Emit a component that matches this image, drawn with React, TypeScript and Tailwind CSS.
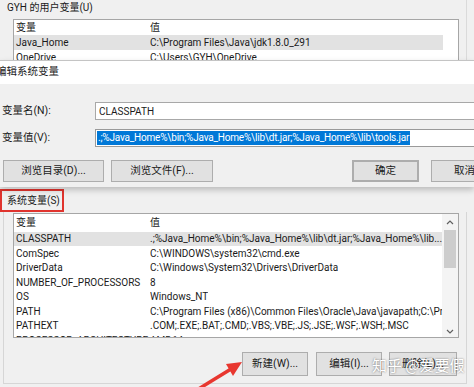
import React from 'react'

type RowProps = {
  name: string
  value: string
  selected?: boolean
  tall?: boolean
}

// one line of the variable list: name column + value column
function VarRow({ name, value, selected, tall }: RowProps) {
  return (
    <div
      className={`flex items-center shrink-0 whitespace-nowrap overflow-hidden ${tall ? 'h-[15px]' : 'h-[14.5px]'} ${
        selected ? 'bg-[#e2e2e2]' : ''
      }`}
    >
      <span className="w-[136px] shrink-0 pl-[2px]">{name}</span>
      <span className="overflow-hidden">{value}</span>
    </div>
  )
}

function WinButton({ label, className = '' }: { label: string; className?: string }) {
  return (
    <div
      className={`flex items-center justify-center shrink-0 whitespace-nowrap bg-[#e1e1e1] border border-[#adadad] text-[10.5px] ${className}`}
    >
      {label}
    </div>
  )
}

function Chevron({ up }: { up?: boolean }) {
  return (
    <svg width="8" height="5" viewBox="0 0 8 5">
      <polyline
        points={up ? '1,4 4,1 7,4' : '1,1 4,4 7,1'}
        fill="none"
        stroke="#606060"
        strokeWidth="1.2"
      />
    </svg>
  )
}

export default function App() {
  return (
    <div className="relative w-[474px] h-[387px] overflow-hidden bg-[#f0f0f0] text-[10px] text-[#1a1a1a] font-['Roboto','Noto_Sans_CJK_SC',sans-serif]">
      {/* User variables (behind the dialog) */}
      <div className="flex h-[60px]">
        <div className="flex flex-col w-[467px] border-r border-[#dadada]">
          <div className="h-[19px] pl-[7px] leading-[15px]">GYH 的用户变量(U)</div>
          <div className="flex flex-col ml-[13px] w-[446px] flex-1 bg-white border border-b-0 border-[#a6a6a6] overflow-hidden">
            <div className="flex flex-col mr-[15px]">
              <VarRow tall name="变量" value="值" />
              <VarRow tall selected name="Java_Home" value="C:\Program Files\Java\jdk1.8.0_291" />
              <VarRow tall name="OneDrive" value="C:\Users\GYH\OneDrive" />
            </div>
          </div>
        </div>
      </div>

      {/* Edit system variable dialog */}
      <div className="relative z-10 flex flex-col h-[127px] bg-[#f0f0f0] border-t border-[#c4c4c4] shadow-[0_3px_6px_rgba(0,0,0,0.22)]">
        <div className="h-[23px] shrink-0 bg-white leading-[22px] -ml-[4px] text-[10.5px]">编辑系统变量</div>
        <div className="flex flex-col pt-[18px]">
          <div className="flex items-center h-[18px]">
            <span className="w-[95px] shrink-0 pl-[2px] text-[10.5px]">变量名(N):</span>
            <div className="flex items-center w-[400px] h-[18px] shrink-0 bg-white border border-[#a8a8a8] pl-[3px]">
              CLASSPATH
            </div>
          </div>
          <div className="flex items-center h-[18px] mt-[9px]">
            <span className="w-[95px] shrink-0 pl-[2px] text-[10.5px]">变量值(V):</span>
            <div className="flex items-center w-[400px] h-[18px] shrink-0 bg-white border border-[#9a9a9a] pl-[1px] whitespace-nowrap">
              <span className="bg-[#0078d7] text-white leading-[14px] px-[1px] tracking-[-0.2px]">
                .;%Java_Home%\bin;%Java_Home%\lib\dt.jar;%Java_Home%\lib\tools.jar
              </span>
            </div>
          </div>
          <div className="flex h-[22px] mt-[13px] pl-[3px]">
            <WinButton label="浏览目录(D)..." className="w-[101px]" />
            <WinButton label="浏览文件(F)..." className="w-[102px] ml-[7px]" />
            <WinButton label="确定" className="w-[67px] ml-[139px] border-2 border-[#0078d7]" />
            <WinButton label="取消" className="w-[67px] ml-[12px]" />
          </div>
        </div>
      </div>

      {/* System variables (behind the dialog) */}
      <div className="flex flex-col h-[200px] pt-[2px]">
        <div className="flex items-center w-[64px] h-[23px] border-2 border-[#e0342e] pl-[5px] whitespace-nowrap">系统变量(S)</div>
        <div className="flex flex-col ml-[3px] w-[464px] h-[172px] border-l border-r border-b border-[#d6d6d6]">
          <div className="flex ml-[9px] mt-[1px] w-[446px] h-[125px] shrink-0 bg-white border border-[#a6a6a6] overflow-hidden">
            <div className="flex flex-col flex-1 min-w-0 overflow-hidden">
              <div className="flex items-center h-[17.5px] shrink-0">
                <span className="w-[136px] shrink-0 pl-[2px]">变量</span>
                <span>值</span>
              </div>
              <VarRow selected name="CLASSPATH" value=".;%Java_Home%\bin;%Java_Home%\lib\dt.jar;%Java_Home%\lib..." />
              <VarRow name="ComSpec" value="C:\WINDOWS\system32\cmd.exe" />
              <VarRow name="DriverData" value="C:\Windows\System32\Drivers\DriverData" />
              <VarRow name="NUMBER_OF_PROCESSORS" value="8" />
              <VarRow name="OS" value="Windows_NT" />
              <VarRow name="PATH" value="C:\Program Files (x86)\Common Files\Oracle\Java\javapath;C:\Pr..." />
              <VarRow name="PATHEXT" value=".COM;.EXE;.BAT;.CMD;.VBS;.VBE;.JS;.JSE;.WSF;.WSH;.MSC" />
              <VarRow name="PROCESSOR_ARCHITECTURE" value="AMD64" />
            </div>
            {/* scrollbar */}
            <div className="flex flex-col w-[16px] shrink-0 bg-[#f4f4f4]">
              <div className="flex items-center justify-center h-[16px]">
                <Chevron up />
              </div>
              <div className="mx-[2px] h-[38px] bg-[#cdcdcd]" />
              <div className="flex-1" />
              <div className="flex items-center justify-center h-[12px]">
                <Chevron />
              </div>
            </div>
          </div>
          <div className="flex h-[24px] mt-[14px] ml-[238px]">
            <WinButton label="新建(W)..." className="w-[66px]" />
            <WinButton label="编辑(I)..." className="w-[66px] ml-[8px]" />
            <WinButton label="删除(L)..." className="w-[68px] ml-[7px]" />
          </div>
        </div>
      </div>

      {/* annotation arrow */}
      <svg className="absolute left-0 top-0 pointer-events-none" width="474" height="387" viewBox="0 0 474 387">
        <line x1="192" y1="393" x2="231" y2="369" stroke="#e8372f" strokeWidth="3.5" />
        <polygon points="242,362 233,376 226,364" fill="#e8372f" />
      </svg>

      {/* watermark */}
      <div className="absolute left-[372px] top-[354px] text-[15px] leading-[22px] text-white whitespace-nowrap font-['Noto_Sans_CJK_SC',sans-serif] [text-shadow:0_0_2px_rgba(0,0,0,0.55)]">
        知乎 @爱要假
      </div>
    </div>
  )
}
